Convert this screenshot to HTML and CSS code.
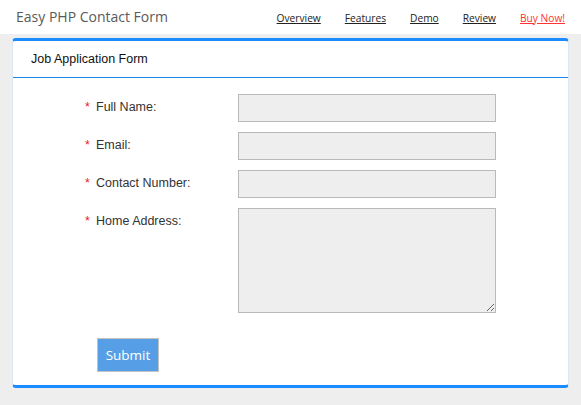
FILE: index.html
```html
<!DOCTYPE html>
<html lang="en">
<head>
<meta charset="utf-8">
<title>Easy PHP Contact Form</title>
<link rel="stylesheet" href="styles.css">
</head>
<body>
<header class="topbar">
  <div class="brand">Easy PHP Contact Form</div>
  <nav class="nav">
    <a href="#">Overview</a>
    <a href="#">Features</a>
    <a href="#">Demo</a>
    <a href="#">Review</a>
    <a href="#" class="buy">Buy Now!</a>
  </nav>
</header>
<main class="page">
  <section class="card">
    <div class="card-head">Job Application Form</div>
    <form class="card-body">
      <div class="row">
        <label class="label"><span class="req">*</span>Full Name:</label>
        <input class="field" type="text">
      </div>
      <div class="row">
        <label class="label"><span class="req">*</span>Email:</label>
        <input class="field" type="text">
      </div>
      <div class="row">
        <label class="label"><span class="req">*</span>Contact Number:</label>
        <input class="field" type="text">
      </div>
      <div class="row">
        <label class="label"><span class="req">*</span>Home Address:</label>
        <textarea class="field area"></textarea>
      </div>
      <div class="actions">
        <button type="button" class="submit">Submit</button>
      </div>
    </form>
  </section>
</main>
</body>
</html>
```

FILE: styles.css
```css
* { box-sizing: border-box; }
html, body { margin: 0; padding: 0; }
body {
  background: #eeeeee;
  font-family: "Liberation Sans", Arial, sans-serif;
  width: 581px;
  height: 405px;
  overflow: hidden;
}
.topbar {
  height: 34px;
  background: #ffffff;
  display: flex;
  align-items: center;
  justify-content: space-between;
  padding: 0 16px;
}
.brand {
  font-family: "Open Sans", sans-serif;
  font-size: 14px;
  color: #5a5a5a;
  margin-top: -1px;
}
.nav {
  display: flex;
  gap: 24px;
  margin-top: 1px;
}
.nav a {
  font-family: "Open Sans", sans-serif;
  font-size: 10.2px;
  color: #222222;
  text-decoration: underline;
}
.nav a.buy { color: #ff3333; }
.page {
  padding: 4px 12px 0 12px;
}
.card {
  background: #ffffff;
  border-top: 3px solid #1a8cff;
  border-bottom: 3px solid #1a8cff;
  border-left: 1px solid #dce8f5;
  border-right: 1px solid #dce8f5;
  border-radius: 4px;
  height: 350px;
}
.card-head {
  height: 37px;
  border-bottom: 1px solid #1e88f0;
  padding-left: 18px;
  display: flex;
  align-items: center;
  font-size: 12.5px;
  color: #111111;
}
.card-body {
  padding: 16px 0 0 72px;
  display: flex;
  flex-direction: column;
  gap: 10px;
  margin: 0;
}
.row {
  display: grid;
  grid-template-columns: 153px 258px;
}
.label {
  font-size: 12.5px;
  color: #333333;
  line-height: 26px;
  display: flex;
}
.req {
  color: #ee2222;
  width: 11px;
}
.field {
  width: 258px;
  height: 28px;
  background: #eeeeee;
  border: 1px solid #b9b9b9;
  margin: 0;
  padding: 0;
  font: inherit;
}
.field.area {
  height: 105px;
  display: block;
}
.actions {
  padding: 15px 0 0 12px;
}
.submit {
  width: 62px;
  height: 34px;
  background: #569fe6;
  border: 1px solid #c2c2c2;
  color: #ffffff;
  font-family: "Open Sans", sans-serif;
  font-size: 13.5px;
  padding: 0;
}
```
